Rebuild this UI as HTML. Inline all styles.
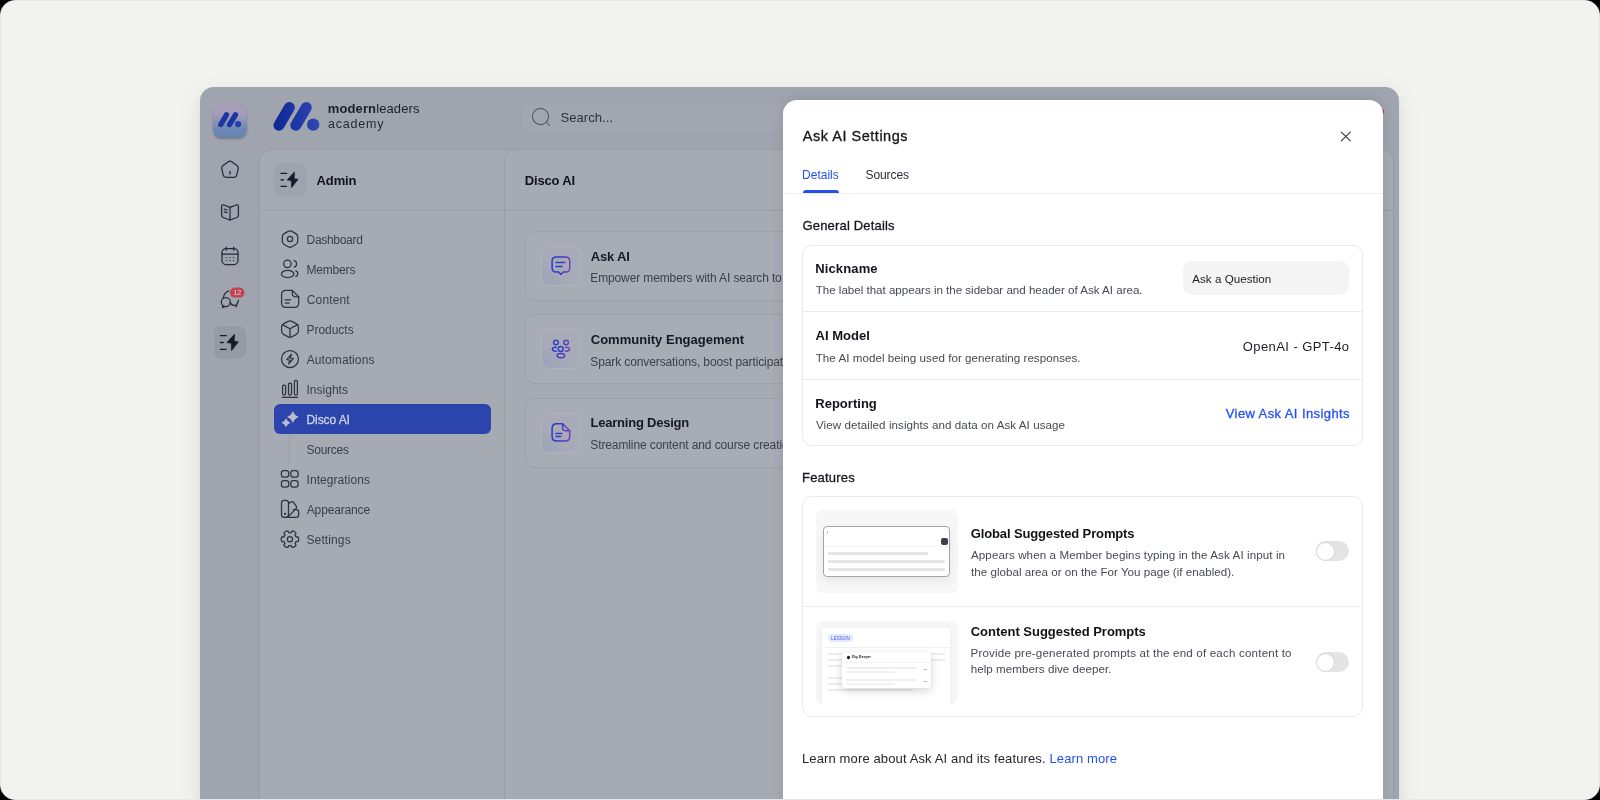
<!DOCTYPE html>
<html>
<head>
<meta charset="utf-8">
<title>Ask AI Settings</title>
<style>
*{box-sizing:border-box;margin:0;padding:0}
html,body{width:1600px;height:800px;overflow:hidden;background:#000}
body{font-family:"Liberation Sans",sans-serif;color:#1a1d29;position:relative}
.abs{position:absolute}
.t{position:absolute;white-space:nowrap;line-height:1}
#page{position:absolute;left:0;top:0;width:1600px;height:800px;background:#f2f3ee;border-radius:15px;overflow:hidden;border:1px solid #e6e6ea}
#win{position:absolute;left:199px;top:86px;width:1199px;height:760px;background:#a0a4ae;border-radius:14px;box-shadow:0 8px 22px rgba(60,60,40,.10),0 2px 6px rgba(60,60,40,.05);overflow:hidden}
/* coordinates inside #win are page coords minus (200,87) -> use inner wrapper */
#w{position:absolute;left:-200px;top:-87px;width:1600px;height:900px;will-change:transform}
#side{left:259px;top:149px;width:262px;height:700px;background:#a6aab3;border:1px solid #999da8;border-right:0;border-radius:13px 0 0 0}
#main{left:504px;top:149px;width:890px;height:700px;background:#a6aab3;border:1px solid #999da8;border-radius:12px 12px 0 0}
.hline{position:absolute;height:1px;background:#999da8}
.nav{position:absolute;left:307px;font-size:11.5px;color:#3a3e4b;white-space:nowrap;line-height:14px}
.card{position:absolute;left:525px;width:400px;height:70px;border:1px solid #9da1ab;border-radius:10px;background:#a8acb5}
.cico{position:absolute;left:14.5px;top:14px;width:40px;height:40px;border-radius:8px;border:1px solid #b0b3be;background:linear-gradient(45deg,#9ca3b9 0%,#a8abb7 45%,#aaaab9 100%)}
.ct{position:absolute;left:591px;font-size:13px;font-weight:bold;color:#161926;white-space:nowrap;line-height:16px}
.cd{position:absolute;left:591px;font-size:11.5px;color:#3d414d;white-space:nowrap;line-height:14px}
#modal{left:783px;top:99.5px;width:600px;height:720px;background:#fff;border-radius:14px 14px 0 0;box-shadow:0 0 12px rgba(30,35,65,.13)}
.box{position:absolute;left:802px;width:561px;border:1px solid #ebebee;border-radius:10px;background:#fff}
.bt{position:absolute;font-size:13px;font-weight:bold;color:#111318;white-space:nowrap;line-height:16px}
.bd{position:absolute;font-size:11px;color:#4a4d55;white-space:nowrap;line-height:14px}
.sec{position:absolute;left:803px;font-size:13px;color:#15171c;white-space:nowrap;line-height:16px}
.tog{position:absolute;left:1316px;width:33px;height:20px;border-radius:10px;background:#e4e4e7}
.tog i{position:absolute;left:0;top:0.5px;width:19px;height:19px;border-radius:10px;background:#fff;border:1px solid #d5d5da}
.thumb{position:absolute;left:816px;width:141.5px;background:#f7f7f7;border-radius:6px;overflow:hidden}
</style>
</head>
<body>
<div id="page">
<div id="win"><div id="w">

<!-- rail -->
<div class="abs" id="railtile" style="left:213px;top:103px;width:34px;height:34px;border-radius:8px;background:linear-gradient(180deg,#a89cb5 0%,#a49db6 35%,#6f88b4 75%,#6484b5 100%);box-shadow:0 2px 2px rgba(40,40,70,.35)"></div>

<!-- header -->
<div class="abs" id="search" style="left:521px;top:101px;width:400px;height:32px;border:1px solid #9ca0aa;border-radius:9px;background:#a2a6b0"></div>

<!-- side panel -->
<div class="abs" id="side"></div>
<div class="abs" id="main"></div>
<div class="hline" style="left:261px;top:210px;width:1132px"></div>

<div class="abs" style="left:274px;top:404px;width:217px;height:30px;border-radius:6px;background:#2b45ad"></div>
<div class="abs" style="left:289px;top:434px;width:1px;height:30px;background:#9a9ea9"></div>

<!-- cards -->
<div class="card" style="top:231px"><div class="cico"></div></div>
<div class="card" style="top:314px"><div class="cico"></div></div>
<div class="card" style="top:398px"><div class="cico"></div></div>

<!--ICONS-START-->
<svg class="abs" style="left:0;top:0" width="1600" height="900" viewBox="0 0 1600 900">
<defs><linearGradient id="lg" x1="273" y1="0" x2="320" y2="0" gradientUnits="userSpaceOnUse"><stop offset="0" stop-color="#0c2794"/><stop offset="1" stop-color="#3048b6"/></linearGradient><linearGradient id="pg" x1="552" y1="0" x2="570" y2="0" gradientUnits="userSpaceOnUse"><stop offset="0" stop-color="#2238cc"/><stop offset="0.55" stop-color="#3a3cc8"/><stop offset="1" stop-color="#7040b8"/></linearGradient></defs>
<g stroke="url(#lg)" stroke-width="11" stroke-linecap="round"><line x1="289.4" y1="107.5" x2="279" y2="125.3"/><line x1="306.3" y1="107.5" x2="295.9" y2="125.3"/></g><circle cx="313.2" cy="124.6" r="6.2" fill="url(#lg)"/>
<g stroke="#1d34a3" stroke-width="5.3" stroke-linecap="round"><line x1="226.45" y1="114.85" x2="220.75" y2="124.55"/><line x1="235.45" y1="114.85" x2="229.55" y2="124.55"/></g><circle cx="238.1" cy="124.1" r="3.1" fill="#2740b0"/>
<g fill="none" stroke="#262a3b" stroke-width="1.25" stroke-linecap="round" stroke-linejoin="round">
<path d="M228.24 161.72 Q230.00 160.40 231.76 161.72 L236.94 165.58 Q238.70 166.90 238.19 169.04 L236.71 175.16 Q236.20 177.30 234.00 177.30 L226.00 177.30 Q223.80 177.30 223.29 175.16 L221.81 169.04 Q221.30 166.90 223.06 165.58Z"/><line x1="230" y1="171.3" x2="230" y2="174"/>
<path d="M230 207.3 L224 205 Q221.6 204.3 221.6 206.6 V215.3 Q221.6 217 223.2 217.5 L230 220 L236.8 217.5 Q238.4 217 238.4 215.3 V206.6 Q238.4 204.3 236 205 Z"/><line x1="230" y1="207.3" x2="230" y2="220"/><line x1="224.3" y1="209.2" x2="227" y2="210"/><line x1="224.3" y1="211.8" x2="227" y2="212.6"/>
<rect x="222" y="248.6" width="16" height="16" rx="4"/><line x1="222" y1="254.2" x2="238" y2="254.2"/><line x1="226.3" y1="247" x2="226.3" y2="250.2"/><line x1="233.7" y1="247" x2="233.7" y2="250.2"/>
<g stroke-width="1" stroke="#4a4e5e"><line x1="226" y1="257.8" x2="227" y2="257.8"/><line x1="229.5" y1="257.8" x2="230.5" y2="257.8"/><line x1="233" y1="257.8" x2="234" y2="257.8"/><line x1="226" y1="260.6" x2="227" y2="260.6"/><line x1="229.5" y1="260.6" x2="230.5" y2="260.6"/><line x1="233" y1="260.6" x2="234" y2="260.6"/></g>
<circle cx="225.8" cy="302.1" r="4.5"/><path d="M222.9 305.6 L222.5 307.6 L224.7 306.5"/><path d="M223.3 298.3 C223.6 294.6 225.8 291.8 228.8 290.8"/><path d="M230.3 302.6 C231.2 304.7 233.2 305.8 235.2 305.2 L236.3 306.7 L236.7 304.5 C237.7 303.3 238.2 301.8 238.5 300.2"/>
</g>
<rect x="230" y="287.6" width="14.4" height="10" rx="5" fill="#c0414f"/><text x="237.2" y="295.3" font-family="Liberation Sans" font-size="7" fill="#e9d8dc" text-anchor="middle">12</text>
<rect x="214" y="326" width="32" height="32.8" rx="7.5" fill="#959aa5"/>
<g stroke="#161a2b" stroke-width="1.37" stroke-linecap="round"><line x1="220.45" y1="335.68" x2="226.33" y2="335.68"/><line x1="220.45" y1="342.50" x2="223.18" y2="342.50"/><line x1="220.45" y1="349.32" x2="226.12" y2="349.32"/></g><path d="M234.62 334.00 L226.86 342.61 L231.27 343.24 L231.47 350.80 L238.41 341.87 L234.31 341.24 Z" fill="#161a2b" stroke="#161a2b" stroke-width="0.6" stroke-linejoin="round"/>
<rect x="273.4" y="163.2" width="33.2" height="33.4" rx="8" fill="#9fa3ad"/>
<g stroke="#161a2b" stroke-width="1.30" stroke-linecap="round"><line x1="281.00" y1="173.40" x2="286.60" y2="173.40"/><line x1="281.00" y1="179.90" x2="283.60" y2="179.90"/><line x1="281.00" y1="186.40" x2="286.40" y2="186.40"/></g><path d="M294.50 171.80 L287.10 180.00 L291.30 180.60 L291.50 187.80 L298.10 179.30 L294.20 178.70 Z" fill="#161a2b" stroke="#161a2b" stroke-width="0.6" stroke-linejoin="round"/>
<g fill="none" stroke="#555a6b" stroke-width="1.1" stroke-linecap="round"><circle cx="540.5" cy="116.5" r="8.1"/><line x1="546.6" y1="122.6" x2="549.6" y2="125.4"/></g>
<g fill="none" stroke="#2e3243" stroke-width="1.25" stroke-linecap="round" stroke-linejoin="round">
<path d="M288.09 231.39 Q290.00 230.30 291.91 231.39 L295.79 233.61 Q297.70 234.70 297.70 236.90 L297.70 241.20 Q297.70 243.40 295.79 244.49 L291.91 246.71 Q290.00 247.80 288.09 246.71 L284.21 244.49 Q282.30 243.40 282.30 241.20 L282.30 236.90 Q282.30 234.70 284.21 233.61Z"/><circle cx="290" cy="239" r="2.6"/>
<circle cx="287.4" cy="263.8" r="3.75"/><ellipse cx="287.6" cy="273.9" rx="6.2" ry="3.6"/><path d="M294 260.5 C297.4 261.2 297.4 266.4 294.3 267.1"/><path d="M295.8 270.9 C298.6 272 298.6 275.4 295.8 276.4"/>
<path d="M292.3 290.4 H286 Q281.6 290.4 281.6 294.8 V303 Q281.6 307.4 286 307.4 H294.3 Q298.7 307.4 298.7 303 V296.8 Z"/><path d="M292.3 290.4 V293.6 Q292.3 296.8 295.5 296.8 H298.7"/><line x1="285.2" y1="299.8" x2="290.6" y2="299.8"/><line x1="285.2" y1="303.1" x2="289.2" y2="303.1"/>
<path d="M288.07 321.36 Q290.00 320.30 291.93 321.36 L296.47 323.84 Q298.40 324.90 298.40 327.10 L298.40 331.10 Q298.40 333.30 296.46 334.34 L291.94 336.76 Q290.00 337.80 288.06 336.76 L283.54 334.34 Q281.60 333.30 281.60 331.10 L281.60 327.10 Q281.60 324.90 283.53 323.84Z"/><path d="M282.4 324.6 L290 328.8 L297.6 324.6 M290 328.8 V337.4"/>
<circle cx="290" cy="359" r="8.5"/><path d="M291.4 354.2 L286.8 359.6 L289.8 360 L288.7 363.9 L293.3 358.5 L290.3 358.1 Z"/>
<rect x="282.6" y="385.1" width="3" height="9.9" rx="1.2"/><rect x="288.5" y="383.1" width="3" height="11.9" rx="1.2"/><rect x="294.4" y="380.3" width="3" height="14.7" rx="1.2"/><line x1="282.2" y1="397.3" x2="297.8" y2="397.3"/>
<rect x="281.4" y="470.7" width="7.3" height="6.3" rx="2.3"/>
<rect x="290.8" y="470.7" width="7.3" height="6.3" rx="2.3"/>
<rect x="281.4" y="480.7" width="7.3" height="6.3" rx="2.3"/>
<rect x="290.8" y="480.7" width="7.3" height="6.3" rx="2.3"/>
<rect x="281.5" y="500.4" width="7" height="17" rx="2.6"/><path d="M288.5 503.5 L290.7 502.1 Q292.6 501 294 502.9 L296.3 506.3 Q297 507.6 296 508.6 L288.6 516.4"/><path d="M293.2 509.6 H296 Q298.7 509.6 298.7 512.2 V514.7 Q298.7 517.4 296 517.4 H285"/>
<circle cx="285" cy="513.8" r="0.5" fill="#2e3243"/>
<path d="M296.21 537.09 Q298.20 536.43 298.48 537.48 Q299.00 539.20 298.48 540.92 Q298.20 541.97 296.21 541.31 Q295.49 542.40 294.90 543.56 Q296.48 544.95 295.70 545.73 Q294.47 547.04 292.72 547.45 Q291.67 547.73 291.25 545.67 Q289.95 545.60 288.65 545.67 Q288.23 547.73 287.18 547.45 Q285.43 547.04 284.20 545.73 Q283.42 544.95 285.00 543.56 Q284.41 542.40 283.69 541.31 Q281.70 541.97 281.42 540.92 Q280.90 539.20 281.42 537.48 Q281.70 536.43 283.69 537.09 Q284.41 536.00 285.00 534.84 Q283.42 533.45 284.20 532.67 Q285.43 531.36 287.18 530.95 Q288.23 530.67 288.65 532.73 Q289.95 532.80 291.25 532.73 Q291.67 530.67 292.72 530.95 Q294.47 531.36 295.70 532.67 Q296.48 533.45 294.90 534.84 Q295.49 536.00 296.21 537.09Z"/><circle cx="289.95" cy="539.2" r="2.6"/>
</g>
<path d="M292.9 410.9 Q294.46 415.34 298.9 416.9 Q294.46 418.46 292.9 422.9 Q291.34 418.46 286.9 416.9 Q291.34 415.34 292.9 410.9Z" fill="#b9bdca"/><path d="M286 418.3 Q287.17 421.63 290.5 422.8 Q287.17 423.97 286 427.3 Q284.83 423.97 281.5 422.8 Q284.83 421.63 286 418.3Z" fill="#b9bdca"/>
<g fill="none" stroke="url(#pg)" stroke-width="1.45" stroke-linecap="round" stroke-linejoin="round">
<path d="M556.2 257 H565.6 Q569.7 257 569.7 261.1 V267.9 Q569.7 272 565.6 272 H563.2 L560.9 274.5 L558.6 272 H556.2 Q552.1 272 552.1 267.9 V261.1 Q552.1 257 556.2 257Z"/><line x1="555.9" y1="262.4" x2="565.1" y2="262.4"/><line x1="555.9" y1="266.4" x2="562.2" y2="266.4"/>
<circle cx="555.9" cy="342.4" r="2.3"/><circle cx="566.1" cy="342.4" r="2.3"/><circle cx="560.7" cy="348.9" r="2.5"/><ellipse cx="560.9" cy="355.6" rx="3.8" ry="2.2"/><path d="M556.3 347.4 C551 346.6 551 351.8 556.3 351.1"/><path d="M565.5 347.4 C570.8 346.6 570.8 351.8 565.5 351.1"/>
<path d="M562.6 423.7 H556.6 Q552.1 423.7 552.1 428.2 V436.4 Q552.1 440.9 556.6 440.9 H565.2 Q569.7 440.9 569.7 436.4 V430.8 Z"/><path d="M562.6 423.7 V427.5 Q562.6 430.8 565.9 430.8 H569.7"/><line x1="555.9" y1="433.4" x2="561.9" y2="433.4"/><line x1="555.9" y1="436.4" x2="560.7" y2="436.4"/>
</g>
</svg>
<!--ICONS-END-->
<!-- modal -->
<div class="abs" id="mwrap" style="left:0;top:0;width:0;height:0;z-index:5">
<div class="abs" style="left:1381.6px;top:108.5px;width:2px;height:5.5px;border-radius:1px;background:#b64a5a"></div>
<div class="abs" id="modal"></div>
<div class="hline" style="left:783px;top:193px;width:600px;background:#efeff1"></div>
<div class="abs" style="left:803px;top:190px;width:36px;height:3px;border-radius:3px 3px 0 0;background:#2450f0"></div>

<div class="box" style="top:245px;height:201px"></div>
<div class="hline" style="left:803px;top:311px;width:559px;background:#ececee"></div>
<div class="hline" style="left:803px;top:379px;width:559px;background:#ececee"></div>
<div class="abs" style="left:1183px;top:261px;width:166px;height:34px;border-radius:9px;background:#f4f4f4"></div>

<div class="box" style="top:496px;height:221px"></div>
<div class="hline" style="left:803px;top:606px;width:559px;background:#ececee"></div>
<div class="thumb" style="top:510px;height:83px">
<div class="abs" style="left:7px;top:16px;width:127px;height:51px;background:#fff;border:1px solid #a3a3a8;border-radius:4px;box-shadow:0 4px 8px rgba(0,0,0,.07)"></div>
<div class="abs" style="left:8px;top:36px;width:125px;height:1px;background:#f3f3f3"></div>
<div class="abs" style="left:12px;top:42px;width:100px;height:3px;border-radius:2px;background:#e4e4e6"></div>
<div class="abs" style="left:12px;top:50px;width:117px;height:3px;border-radius:2px;background:#e4e4e6"></div>
<div class="abs" style="left:12px;top:58px;width:117px;height:3px;border-radius:2px;background:#e4e4e6"></div>
<div class="abs" style="left:125px;top:28px;width:7px;height:7px;border-radius:2px;background:#3e3e49"></div>
<div class="abs" style="left:11px;top:21px;width:1px;height:3px;background:#c8c8cc"></div>
</div>
<div class="thumb" style="top:621px;height:83px">
<div class="abs" style="left:6px;top:7px;width:128px;height:90px;background:#fff;border-radius:4px;box-shadow:0 0 6px rgba(0,0,0,.05)"></div>
<div class="abs" style="left:12px;top:12.5px;width:25px;height:8px;border-radius:4px;background:#e6e9ff;color:#3d5af0;font-size:4.5px;line-height:9.5px;text-align:center;letter-spacing:.1px">LESSON</div>
<div class="abs" style="left:6px;top:26px;width:128px;height:1px;background:#f1f1f1"></div>
<div class="abs" style="left:12px;top:32px;width:117px;height:2px;background:#ececec"></div>
<div class="abs" style="left:12px;top:38px;width:117px;height:2px;background:#ececec"></div>
<div class="abs" style="left:12px;top:44px;width:20px;height:2px;background:#ececec"></div>
<div class="abs" style="left:12px;top:56px;width:20px;height:2px;background:#ececec"></div>
<div class="abs" style="left:12px;top:62px;width:20px;height:2px;background:#ececec"></div>
<div class="abs" style="left:12px;top:68px;width:85px;height:2px;background:#ececec"></div>
<div class="abs" style="left:26px;top:31px;width:89px;height:36px;background:#fff;border-radius:3px;box-shadow:0 3px 8px rgba(0,0,0,.16),0 0 1px rgba(0,0,0,.12)"></div>
<div class="abs" style="left:27px;top:41px;width:87px;height:1px;background:#f1f1f1"></div>
<div class="abs" style="left:31px;top:35px;width:3px;height:3px;border-radius:1px;background:#222;transform:rotate(45deg)"></div>
<div class="abs" style="left:36px;top:34px;font-size:3.6px;line-height:5px;color:#222;font-weight:bold;white-space:nowrap">Dig Deeper</div>
<div class="abs" style="left:30px;top:46px;width:70px;height:2px;background:#efefef"></div>
<div class="abs" style="left:30px;top:50px;width:49px;height:2px;background:#f1f1f1"></div>
<div class="abs" style="left:30px;top:58px;width:70px;height:2px;background:#efefef"></div>
<div class="abs" style="left:30px;top:62px;width:49px;height:2px;background:#f1f1f1"></div>
<div class="abs" style="left:108px;top:47.5px;width:3px;height:1px;background:#b5b5b5"></div>
<div class="abs" style="left:108px;top:59.5px;width:3px;height:1px;background:#b5b5b5"></div>
</div>
<div class="tog" style="top:541px"><i></i></div>
<div class="tog" style="top:652px"><i></i></div>

<svg class="abs" style="left:1336px;top:126px" width="20" height="20" viewBox="0 0 20 20"><path d="M5.3 6.2 L14.3 14.9 M14.3 6.2 L5.3 14.9" stroke="#33353c" stroke-width="1.1" stroke-linecap="round" fill="none"/></svg>
</div><!-- /mwrap -->
<!--TEXT-START-->
<div class="t" style="left:327.75px;top:102px;font-size:13px;color:#1b1e2b;letter-spacing:0.116px"><b>modern</b>leaders</div>
<div class="t" style="left:328.0px;top:118px;font-size:12.5px;color:#262a37;letter-spacing:0.794px">academy</div>
<div class="t" style="left:560.5px;top:111px;font-size:13px;color:#2d313d;letter-spacing:0.065px">Search...</div>
<div class="t" style="left:316.5px;top:174px;font-size:13px;font-weight:bold;color:#10131f;letter-spacing:-0.101px">Admin</div>
<div class="t" style="left:524.75px;top:174px;font-size:13px;font-weight:bold;color:#10131f;letter-spacing:-0.176px">Disco AI</div>
<div class="t" style="left:306.5px;top:234px;font-size:12px;color:#3a3e4b;letter-spacing:-0.290px">Dashboard</div>
<div class="t" style="left:306.5px;top:264px;font-size:12px;color:#3a3e4b;letter-spacing:-0.186px">Members</div>
<div class="t" style="left:306.75px;top:294px;font-size:12px;color:#3a3e4b;letter-spacing:0.145px">Content</div>
<div class="t" style="left:306.5px;top:324px;font-size:12px;color:#3a3e4b;letter-spacing:-0.030px">Products</div>
<div class="t" style="left:306.75px;top:354px;font-size:12px;color:#3a3e4b;letter-spacing:0.095px">Automations</div>
<div class="t" style="left:306.5px;top:384px;font-size:12px;color:#3a3e4b;letter-spacing:0.006px">Insights</div>
<div class="t" style="left:306.5px;top:414px;font-size:12px;-webkit-text-stroke:0.3px;color:#cfd3e2;letter-spacing:-0.088px">Disco AI</div>
<div class="t" style="left:306.5px;top:444px;font-size:12px;color:#3a3e4b;letter-spacing:-0.272px">Sources</div>
<div class="t" style="left:306.5px;top:474px;font-size:12px;color:#3a3e4b;letter-spacing:0.062px">Integrations</div>
<div class="t" style="left:306.75px;top:504px;font-size:12px;color:#3a3e4b;letter-spacing:-0.147px">Appearance</div>
<div class="t" style="left:306.5px;top:534px;font-size:12px;color:#3a3e4b;letter-spacing:0.113px">Settings</div>
<div class="t" style="left:590.75px;top:250px;font-size:13px;font-weight:bold;color:#151826;letter-spacing:-0.187px">Ask AI</div>
<div class="t" style="left:590.25px;top:272px;font-size:12px;color:#3c404c;letter-spacing:-0.121px">Empower members with AI search to find answers</div>
<div class="t" style="left:590.75px;top:333px;font-size:13px;font-weight:bold;color:#151826;letter-spacing:0.009px">Community Engagement</div>
<div class="t" style="left:590.25px;top:356px;font-size:12px;color:#3c404c;letter-spacing:-0.109px">Spark conversations, boost participation</div>
<div class="t" style="left:590.5px;top:416px;font-size:13px;font-weight:bold;color:#151826;letter-spacing:-0.219px">Learning Design</div>
<div class="t" style="left:590.25px;top:439px;font-size:12px;color:#3c404c;letter-spacing:-0.103px">Streamline content and course creation</div>
<div class="t" style="z-index:6;left:802.75px;top:129px;font-size:14.5px;-webkit-text-stroke:0.3px;color:#14161b;letter-spacing:0.519px">Ask AI Settings</div>
<div class="t" style="z-index:6;left:802px;top:169px;font-size:12px;color:#2450f0;letter-spacing:0.019px">Details</div>
<div class="t" style="z-index:6;left:865.5px;top:169px;font-size:12px;color:#2a2d35;letter-spacing:-0.080px">Sources</div>
<div class="t" style="z-index:6;left:802.5px;top:219px;font-size:13px;-webkit-text-stroke:0.3px;color:#15171c;letter-spacing:0.174px">General Details</div>
<div class="t" style="z-index:6;left:815.25px;top:262px;font-size:13px;font-weight:bold;color:#111318;letter-spacing:0.125px">Nickname</div>
<div class="t" style="z-index:6;left:815.75px;top:284px;font-size:11.6px;color:#474a52;letter-spacing:-0.020px">The label that appears in the sidebar and header of Ask AI area.</div>
<div class="t" style="z-index:6;left:1192.25px;top:273px;font-size:11.6px;color:#1c1e24;letter-spacing:0.033px">Ask a Question</div>
<div class="t" style="z-index:6;left:815.5px;top:329px;font-size:13px;font-weight:bold;color:#111318;letter-spacing:0.018px">AI Model</div>
<div class="t" style="z-index:6;left:815.75px;top:352px;font-size:11.6px;color:#474a52;letter-spacing:0.038px">The AI model being used for generating responses.</div>
<div class="t" style="z-index:6;left:1242.75px;top:340px;font-size:13px;color:#1c1e24;letter-spacing:0.419px">OpenAI - GPT-4o</div>
<div class="t" style="z-index:6;left:815.25px;top:397px;font-size:13px;font-weight:bold;color:#111318;letter-spacing:0.020px">Reporting</div>
<div class="t" style="z-index:6;left:816px;top:419px;font-size:11.6px;color:#474a52;letter-spacing:0.066px">View detailed insights and data on Ask AI usage</div>
<div class="t" style="z-index:6;left:1225.75px;top:407px;font-size:13px;-webkit-text-stroke:0.3px;color:#2450f0;letter-spacing:0.405px">View Ask AI Insights</div>
<div class="t" style="z-index:6;left:802.0px;top:471px;font-size:13px;-webkit-text-stroke:0.3px;color:#15171c;letter-spacing:0.212px">Features</div>
<div class="t" style="z-index:6;left:970.75px;top:527px;font-size:13px;font-weight:bold;color:#111318;letter-spacing:-0.133px">Global Suggested Prompts</div>
<div class="t" style="z-index:6;left:971px;top:549px;font-size:11.6px;color:#474a52;letter-spacing:0.094px">Appears when a Member begins typing in the Ask AI input in</div>
<div class="t" style="z-index:6;left:971px;top:566px;font-size:11.6px;color:#474a52;letter-spacing:0.019px">the global area or on the For You page (if enabled).</div>
<div class="t" style="z-index:6;left:970.75px;top:625px;font-size:13px;font-weight:bold;color:#111318;letter-spacing:-0.019px">Content Suggested Prompts</div>
<div class="t" style="z-index:6;left:970.5px;top:647px;font-size:11.6px;color:#474a52;letter-spacing:0.179px">Provide pre-generated prompts at the end of each content to</div>
<div class="t" style="z-index:6;left:970.75px;top:663px;font-size:11.6px;color:#474a52;letter-spacing:0.039px">help members dive deeper.</div>
<div class="t" style="z-index:6;left:802px;top:752px;font-size:13px;color:#25272e;letter-spacing:0.127px">Learn more about Ask AI and its features. <span style="color:#2450f0">Learn more</span></div>
<!--TEXT-END-->
</div></div>
</div>
</body>
</html>
